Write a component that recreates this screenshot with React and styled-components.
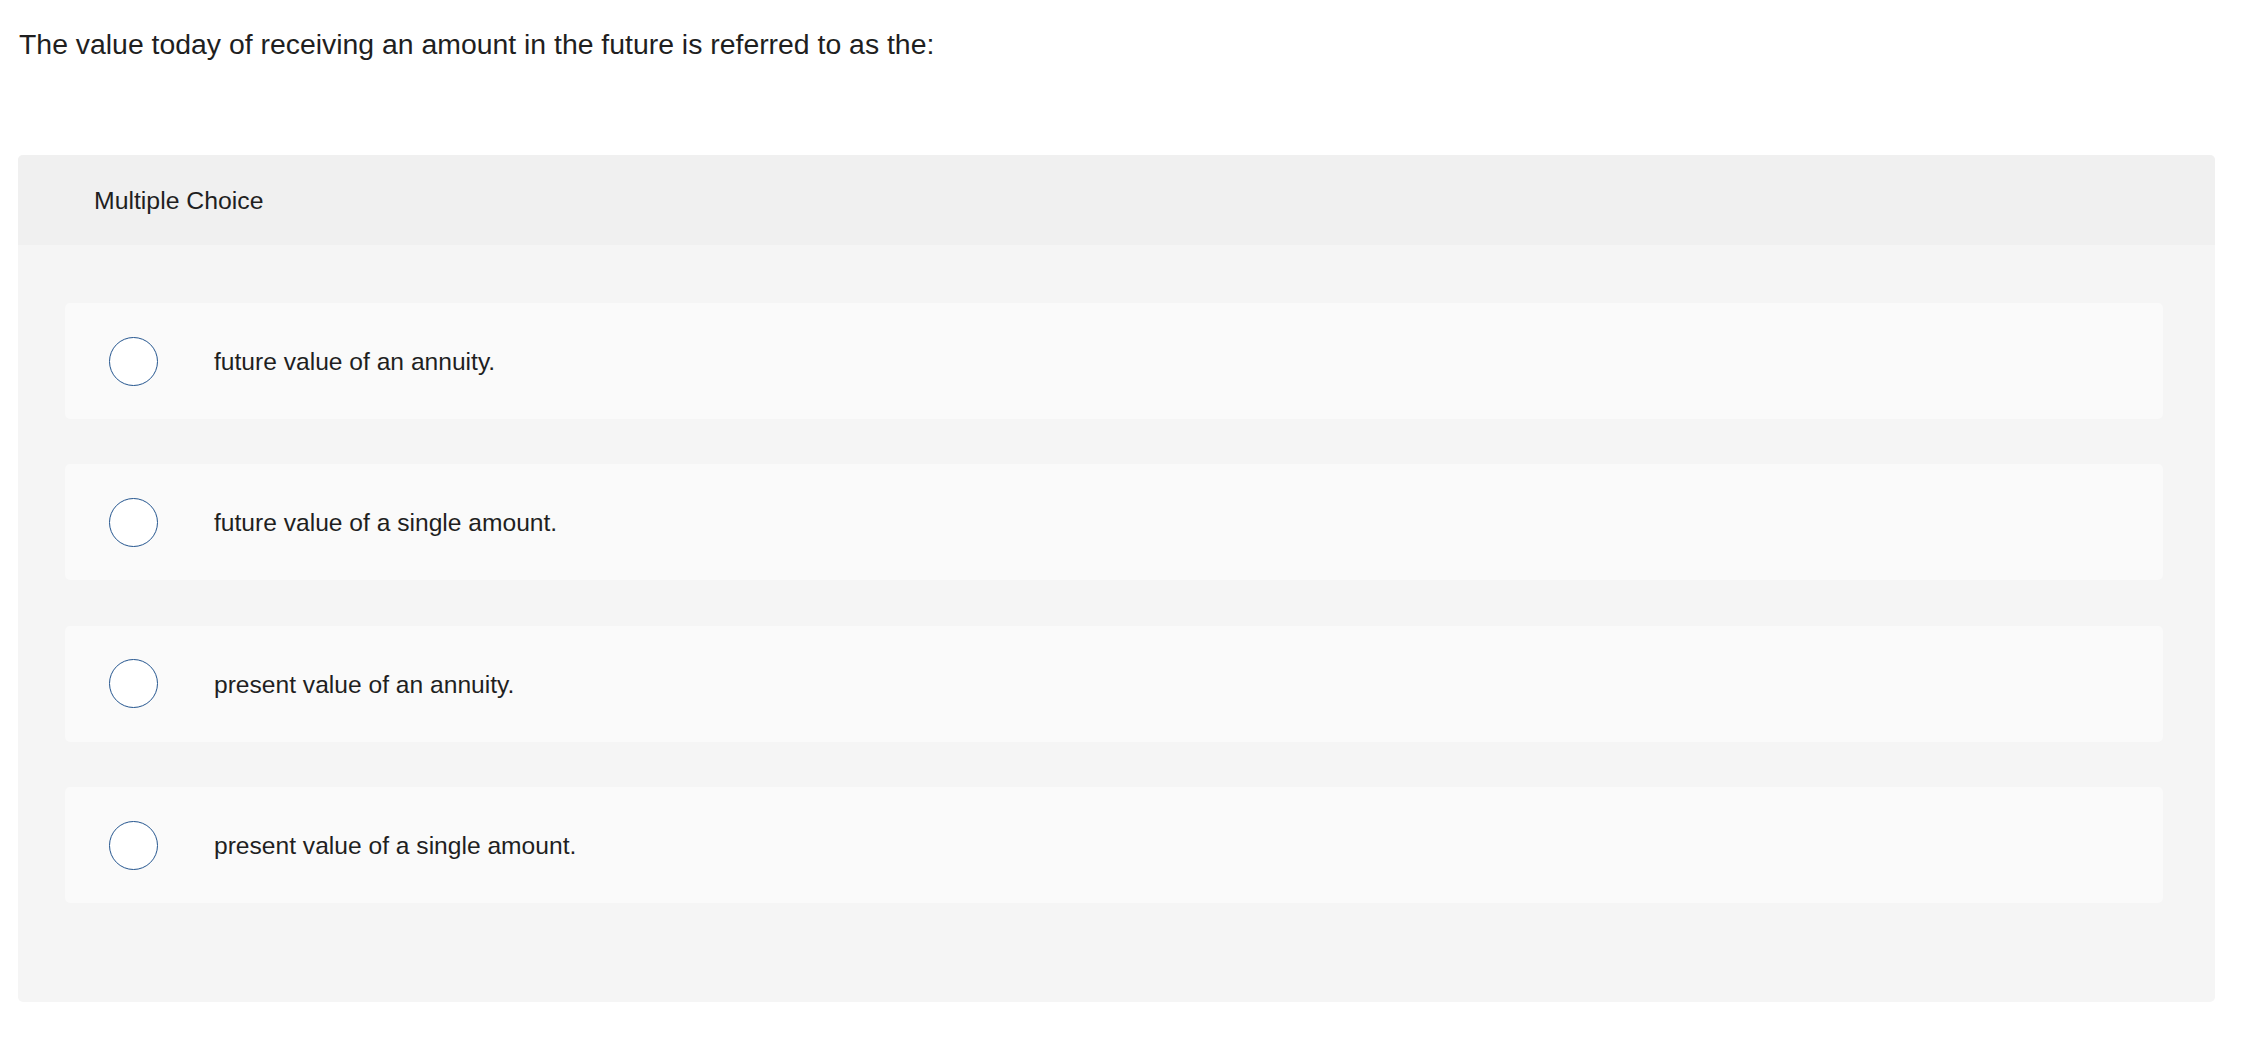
import React from "react";
import styled, { createGlobalStyle } from "styled-components";

const GlobalStyle = createGlobalStyle`
  html, body {
    margin: 0;
    padding: 0;
    background: #ffffff;
  }
  body {
    font-family: "Liberation Sans", Arial, sans-serif;
    color: #1f1f1f;
  }
`;

const Page = styled.div`
  padding: 27px 45px 40px 18px;
`;

const Question = styled.p`
  margin: 0 0 94px 1px;
  font-size: 28.4px;
  line-height: 34px;
  color: #1f1f1f;
`;

const Card = styled.section`
  background: #f5f5f5;
  border-radius: 5px;
  overflow: hidden;
`;

const CardHeader = styled.header`
  height: 90px;
  display: flex;
  align-items: center;
  padding-left: 76px;
  padding-top: 1px;
  box-sizing: border-box;
  background: #f0f0f0;
  font-size: 24.8px;
  color: #1f1f1f;
`;

const OptionList = styled.ul`
  list-style: none;
  margin: 0;
  padding: 58px 52px 99px 47px;
  display: flex;
  flex-direction: column;
  gap: 45.4px;
`;

const Option = styled.li`
  height: 116px;
  display: flex;
  align-items: center;
  padding-left: 44px;
  background: #fafafa;
  border-radius: 5px;
`;

const Radio = styled.span`
  flex: none;
  width: 49px;
  height: 49px;
  box-sizing: border-box;
  border-radius: 50%;
  border: 1.8px solid #25568f;
  background: #ffffff;
  margin-right: 56px;
`;

const OptionText = styled.span`
  font-size: 24.6px;
  padding-top: 2px;
  color: #1f1f1f;
`;

const options = [
  "future value of an annuity.",
  "future value of a single amount.",
  "present value of an annuity.",
  "present value of a single amount.",
];

export default function App() {
  return (
    <>
      <GlobalStyle />
      <Page>
        <Question>
          The value today of receiving an amount in the future is referred to as the:
        </Question>
        <Card>
          <CardHeader>Multiple Choice</CardHeader>
          <OptionList>
            {options.map((o) => (
              <Option key={o}>
                <Radio />
                <OptionText>{o}</OptionText>
              </Option>
            ))}
          </OptionList>
        </Card>
      </Page>
    </>
  );
}
